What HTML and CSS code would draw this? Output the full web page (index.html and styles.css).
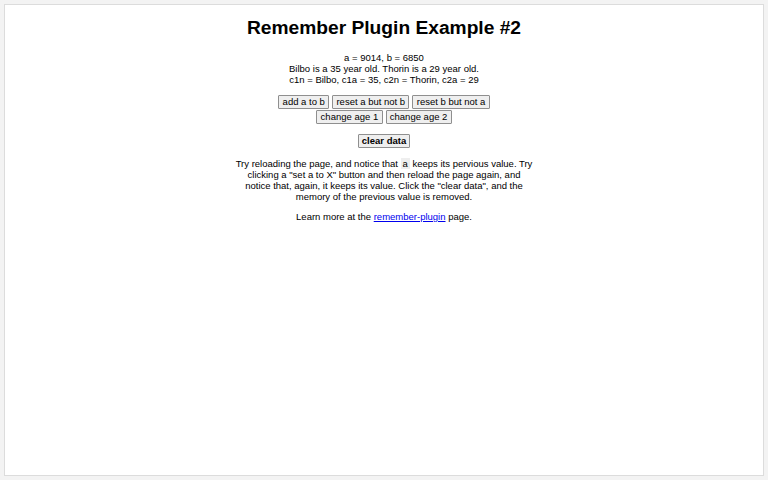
FILE: index.html
```html
<!DOCTYPE html>
<html lang="en">
<head>
    <meta charset="UTF-8">
    <title>Remember Plugin Example #2</title>
    <link rel="stylesheet" href="styles.css">
</head>
<body>
    <div class="page">
        <h1>Remember Plugin Example #2</h1>

        <div class="values">
            <div>a = 9014, b = 6850</div>
            <div>Bilbo is a 35 year old. Thorin is a 29 year old.</div>
            <div>c1n = Bilbo, c1a = 35, c2n = Thorin, c2a = 29</div>
        </div>

        <div class="buttons">
            <div class="row">
                <button>add a to b</button>
                <button>reset a but not b</button>
                <button>reset b but not a</button>
            </div>
            <div class="row">
                <button>change age 1</button>
                <button>change age 2</button>
            </div>
        </div>

        <div class="buttons">
            <button class="clear-btn">clear data</button>
        </div>

        <p class="info">Try reloading the page, and notice that <code>a</code> keeps its pervious value. Try clicking a "set a to X" button and then reload the page again, and notice that, again, it keeps its value. Click the "clear data", and the memory of the previous value is removed.</p>

        <p class="learn">Learn more at the <a href="#">remember-plugin</a> page.</p>
    </div>
</body>
</html>
```

FILE: styles.css
```css
* {
    margin: 0;
    padding: 0;
    box-sizing: border-box;
}

body {
    background-color: #f3f3f3;
    padding: 4px;
    font-family: "Liberation Sans", Arial, sans-serif;
    color: #000;
    font-size: 9.5px;
    line-height: 11px;
}

.page {
    background-color: #ffffff;
    border: 1px solid #dcdcdc;
    height: 472px;
    text-align: center;
    padding-top: 11px;
}

h1 {
    font-size: 19.2px;
    line-height: 24px;
    font-weight: bold;
    margin-bottom: 12px;
}

.values {
    margin-bottom: 10px;
}

.buttons {
    margin-bottom: 10px;
}

.row {
    display: flex;
    justify-content: center;
    gap: 3px;
    margin-bottom: 1px;
}

button {
    font-family: "Liberation Sans", Arial, sans-serif;
    font-size: 9.5px;
    line-height: 12px;
    padding: 0 3.3px;
    background: #efefef;
    border: 1px solid #8f8f8f;
    border-radius: 1px;
    color: #000;
}

.clear-btn {
    font-weight: bold;
}

.info {
    width: 298px;
    margin: 0 auto 9px;
}

code {
    font-family: "Liberation Sans", Arial, sans-serif;
    background: #eeeeee;
    padding: 0 2px;
}

.learn a {
    color: #0000ee;
}
```
